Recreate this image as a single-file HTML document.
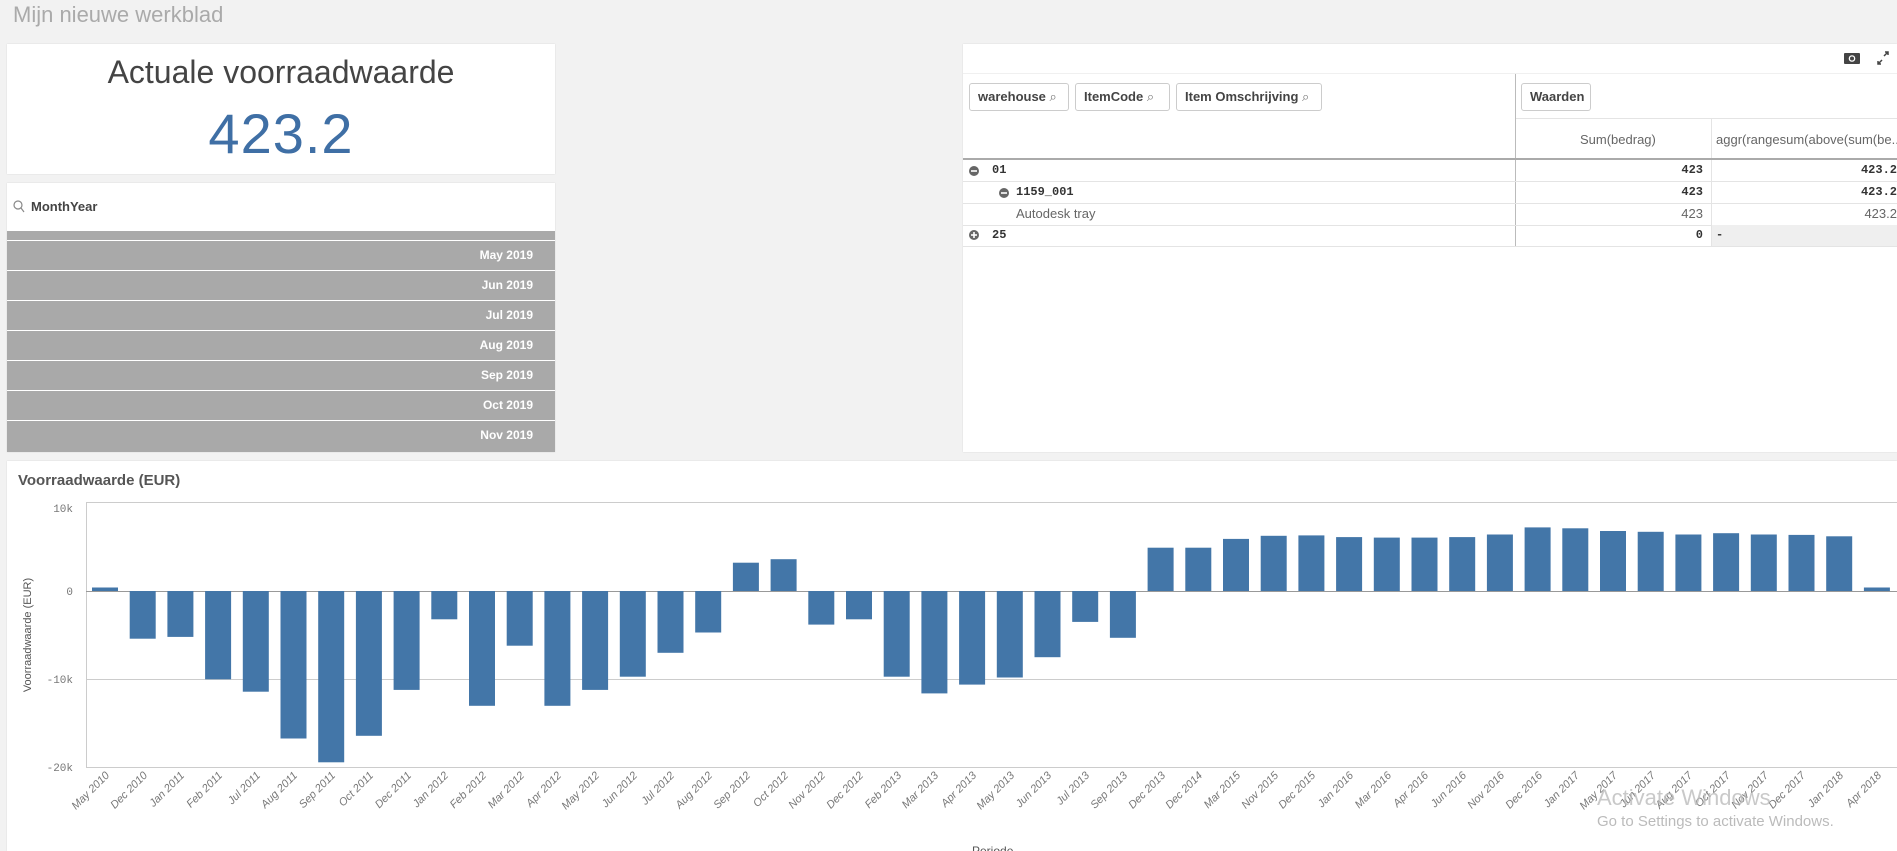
<!DOCTYPE html>
<html><head><meta charset="utf-8"><style>
*{margin:0;padding:0;box-sizing:border-box}
body{width:1897px;height:851px;background:#f2f2f2;font-family:"Liberation Sans",sans-serif;position:relative;overflow:hidden;color:#333}
.abs{position:absolute}
.card{position:absolute;background:#fff;box-shadow:0 0 1px #ccc}
.row{position:absolute;left:0;width:548px;height:29px;background:#a9a9a9;color:#fff;font-weight:bold;font-size:12px;text-align:right;padding-right:22px;line-height:29px}
.pill{position:absolute;top:83px;height:28px;border:1px solid #ccc;border-radius:3px;background:#fff;font-weight:bold;font-size:13px;line-height:26px;padding-left:8px;color:#444}
.mono{font-family:"Liberation Mono",monospace;font-weight:bold;font-size:12px}
.tr{position:absolute;left:963px;width:934px;height:22px;border-bottom:1px solid #e4e4e4}
</style></head><body>
<div class="abs" style="left:13px;top:2px;font-size:22px;color:#aaa">Mijn nieuwe werkblad</div>

<div class="card" style="left:7px;top:44px;width:548px;height:130px;overflow:hidden">
<div class="abs" style="left:0;width:548px;top:12px;text-align:center;font-size:32px;line-height:1;color:#444">Actuale voorraadwaarde</div>
<div class="abs" style="left:0;width:548px;top:62px;text-align:center;font-size:56px;line-height:1;color:#3f6fa5;letter-spacing:1px">423.2</div>
</div>

<div class="card" style="left:7px;top:183px;width:548px;height:269px;overflow:hidden">
<svg class="abs" style="left:6px;top:17px" width="12" height="13"><circle cx="5" cy="5" r="4" fill="none" stroke="#888" stroke-width="1.2"/><line x1="8" y1="8" x2="11" y2="12" stroke="#888" stroke-width="1.2"/></svg>
<div class="abs" style="left:24px;top:16px;font-weight:bold;font-size:13px;color:#444">MonthYear</div>
<div class="row" style="top:48px;height:9px"></div>
<div class="row" style="top:58px">May 2019</div>
<div class="row" style="top:88px">Jun 2019</div>
<div class="row" style="top:118px">Jul 2019</div>
<div class="row" style="top:148px">Aug 2019</div>
<div class="row" style="top:178px">Sep 2019</div>
<div class="row" style="top:208px">Oct 2019</div>
<div class="row" style="top:238px;height:31px">Nov 2019</div>
</div>

<div class="card" style="left:963px;top:44px;width:934px;height:408px"></div>
<svg class="abs" style="left:1843px;top:51px" width="18" height="14"><rect x="1" y="2" width="16" height="11" rx="1" fill="#444"/><circle cx="9" cy="7.5" r="3.3" fill="#fff"/><circle cx="9" cy="7.5" r="2" fill="#444"/></svg>
<svg class="abs" style="left:1876px;top:50px" width="14" height="16"><path d="M8 6L12 2M9 2h3v3M6 10L2 14M2 11v3h3" stroke="#444" stroke-width="1.5" fill="none"/></svg>
<div class="abs" style="left:963px;top:73px;width:934px;height:1px;background:#f0f0f0"></div>
<div class="pill" style="left:969px;width:100px">warehouse <span style="font-weight:normal;color:#777">&#x2315;</span></div>
<div class="pill" style="left:1075px;width:95px">ItemCode <span style="font-weight:normal;color:#777">&#x2315;</span></div>
<div class="pill" style="left:1176px;width:146px">Item Omschrijving <span style="font-weight:normal;color:#777">&#x2315;</span></div>
<div class="abs" style="left:1515px;top:74px;width:1px;height:172px;background:#bbb"></div>
<div class="pill" style="left:1521px;width:70px">Waarden</div>
<div class="abs" style="left:1516px;top:118px;width:381px;height:1px;background:#e4e4e4"></div>
<div class="abs" style="left:1711px;top:118px;width:1px;height:128px;background:#e4e4e4"></div>
<div class="abs" style="left:1580px;top:132px;font-size:13px;color:#666">Sum(bedrag)</div>
<div class="abs" style="left:1716px;top:132px;font-size:13px;color:#666;white-space:nowrap">aggr(rangesum(above(sum(be...</div>
<div class="abs" style="left:963px;top:158px;width:934px;height:2px;background:#aaa"></div>
<div class="tr" style="top:160px"></div><div class="tr" style="top:182px"></div><div class="tr" style="top:204px"></div><div class="tr" style="top:225px"></div>
<div class="abs" style="left:1712px;top:225px;width:185px;height:21px;background:#efefef"></div>
<svg class="abs" style="left:968px;top:165px" width="12" height="12"><circle cx="6" cy="6" r="5" fill="#666"/><rect x="3" y="5.2" width="6" height="1.6" fill="#fff"/></svg>
<svg class="abs" style="left:998px;top:187px" width="12" height="12"><circle cx="6" cy="6" r="5" fill="#666"/><rect x="3" y="5.2" width="6" height="1.6" fill="#fff"/></svg>
<svg class="abs" style="left:968px;top:229px" width="12" height="12"><circle cx="6" cy="6" r="5" fill="#666"/><rect x="3" y="5.2" width="6" height="1.6" fill="#fff"/><rect x="5.2" y="3" width="1.6" height="6" fill="#fff"/></svg>
<div class="abs mono" style="left:992px;top:163px">01</div>
<div class="abs mono" style="left:1016px;top:185px">1159_001</div>
<div class="abs" style="left:1016px;top:206px;font-size:13px;color:#666">Autodesk tray</div>
<div class="abs mono" style="left:992px;top:228px">25</div>
<div class="abs mono" style="left:1600px;width:103px;text-align:right;top:163px">423</div>
<div class="abs mono" style="left:1600px;width:103px;text-align:right;top:185px">423</div>
<div class="abs" style="left:1600px;width:103px;text-align:right;top:206px;font-size:13px;color:#666">423</div>
<div class="abs mono" style="left:1600px;width:103px;text-align:right;top:228px">0</div>
<div class="abs mono" style="left:1716px;top:228px">-</div>
<div class="abs mono" style="left:1790px;width:107px;text-align:right;top:163px">423.2</div>
<div class="abs mono" style="left:1790px;width:107px;text-align:right;top:185px">423.2</div>
<div class="abs" style="left:1790px;width:107px;text-align:right;top:206px;font-size:13px;color:#666">423.2</div>

<div class="card" style="left:7px;top:461px;width:1890px;height:390px"></div>
<div class="abs" style="left:18px;top:472px;font-weight:bold;font-size:15px;color:#555">Voorraadwaarde (EUR)</div>
<svg class="abs" style="left:0;top:0" width="1897" height="851" font-family="Liberation Sans, sans-serif">
<g stroke="#ccc" stroke-width="1"><line x1="86" y1="502.5" x2="1897" y2="502.5"/><line x1="86" y1="679.5" x2="1897" y2="679.5"/><line x1="86" y1="767.5" x2="1897" y2="767.5"/><line x1="86.5" y1="502" x2="86.5" y2="768"/></g>
<line x1="86" y1="591.5" x2="1897" y2="591.5" stroke="#999"/>
<g font-family="Liberation Mono, monospace" font-size="11" fill="#777" text-anchor="end"><text x="73" y="512">10k</text><text x="73" y="595">0</text><text x="73" y="683">-10k</text><text x="73" y="771">-20k</text></g>
<text transform="translate(31,635) rotate(-90)" text-anchor="middle" font-size="11" fill="#555">Voorraadwaarde (EUR)</text>
<g fill="#4376a8">
<rect x="92" y="587.5" width="26" height="3.5"/><rect x="129.7" y="591" width="26" height="47.7"/><rect x="167.4" y="591" width="26" height="45.9"/><rect x="205.1" y="591" width="26" height="88.3"/><rect x="242.8" y="591" width="26" height="100.7"/><rect x="280.5" y="591" width="26" height="147.5"/><rect x="318.2" y="591" width="26" height="171.3"/><rect x="355.9" y="591" width="26" height="144.8"/><rect x="393.6" y="591" width="26" height="98.9"/><rect x="431.3" y="591" width="26" height="28.3"/><rect x="469" y="591" width="26" height="114.8"/><rect x="506.7" y="591" width="26" height="54.7"/><rect x="544.4" y="591" width="26" height="114.8"/><rect x="582.1" y="591" width="26" height="98.9"/><rect x="619.8" y="591" width="26" height="85.7"/><rect x="657.5" y="591" width="26" height="61.8"/><rect x="695.2" y="591" width="26" height="41.5"/><rect x="732.9" y="562.7" width="26" height="28.3"/><rect x="770.6" y="559.2" width="26" height="31.8"/><rect x="808.3" y="591" width="26" height="33.6"/><rect x="846" y="591" width="26" height="28.3"/><rect x="883.7" y="591" width="26" height="85.7"/><rect x="921.4" y="591" width="26" height="102.4"/><rect x="959.1" y="591" width="26" height="93.6"/><rect x="996.8" y="591" width="26" height="86.5"/><rect x="1034.5" y="591" width="26" height="66.2"/><rect x="1072.2" y="591" width="26" height="30.9"/><rect x="1109.9" y="591" width="26" height="46.8"/><rect x="1147.6" y="547.7" width="26" height="43.3"/><rect x="1185.3" y="547.7" width="26" height="43.3"/><rect x="1223" y="538.9" width="26" height="52.1"/><rect x="1260.7" y="535.8" width="26" height="55.2"/><rect x="1298.4" y="535.4" width="26" height="55.6"/><rect x="1336.1" y="537.1" width="26" height="53.9"/><rect x="1373.8" y="537.6" width="26" height="53.4"/><rect x="1411.5" y="537.6" width="26" height="53.4"/><rect x="1449.2" y="537.1" width="26" height="53.9"/><rect x="1486.9" y="534.5" width="26" height="56.5"/><rect x="1524.6" y="527.4" width="26" height="63.6"/><rect x="1562.3" y="528.3" width="26" height="62.7"/><rect x="1600" y="531" width="26" height="60"/><rect x="1637.7" y="531.8" width="26" height="59.2"/><rect x="1675.4" y="534.5" width="26" height="56.5"/><rect x="1713.1" y="533.2" width="26" height="57.8"/><rect x="1750.8" y="534.5" width="26" height="56.5"/><rect x="1788.5" y="534.9" width="26" height="56.1"/><rect x="1826.2" y="536.3" width="26" height="54.7"/><rect x="1863.9" y="587.5" width="26" height="3.5"/>
</g>
<g font-size="11" fill="#777" text-anchor="end" font-style="italic">
<text transform="translate(110,776) rotate(-45)">May 2010</text><text transform="translate(148,776) rotate(-45)">Dec 2010</text><text transform="translate(185,776) rotate(-45)">Jan 2011</text><text transform="translate(223,776) rotate(-45)">Feb 2011</text><text transform="translate(261,776) rotate(-45)">Jul 2011</text><text transform="translate(298,776) rotate(-45)">Aug 2011</text><text transform="translate(336,776) rotate(-45)">Sep 2011</text><text transform="translate(374,776) rotate(-45)">Oct 2011</text><text transform="translate(412,776) rotate(-45)">Dec 2011</text><text transform="translate(449,776) rotate(-45)">Jan 2012</text><text transform="translate(487,776) rotate(-45)">Feb 2012</text><text transform="translate(525,776) rotate(-45)">Mar 2012</text><text transform="translate(562,776) rotate(-45)">Apr 2012</text><text transform="translate(600,776) rotate(-45)">May 2012</text><text transform="translate(638,776) rotate(-45)">Jun 2012</text><text transform="translate(675,776) rotate(-45)">Jul 2012</text><text transform="translate(713,776) rotate(-45)">Aug 2012</text><text transform="translate(751,776) rotate(-45)">Sep 2012</text><text transform="translate(789,776) rotate(-45)">Oct 2012</text><text transform="translate(826,776) rotate(-45)">Nov 2012</text><text transform="translate(864,776) rotate(-45)">Dec 2012</text><text transform="translate(902,776) rotate(-45)">Feb 2013</text><text transform="translate(939,776) rotate(-45)">Mar 2013</text><text transform="translate(977,776) rotate(-45)">Apr 2013</text><text transform="translate(1015,776) rotate(-45)">May 2013</text><text transform="translate(1052,776) rotate(-45)">Jun 2013</text><text transform="translate(1090,776) rotate(-45)">Jul 2013</text><text transform="translate(1128,776) rotate(-45)">Sep 2013</text><text transform="translate(1166,776) rotate(-45)">Dec 2013</text><text transform="translate(1203,776) rotate(-45)">Dec 2014</text><text transform="translate(1241,776) rotate(-45)">Mar 2015</text><text transform="translate(1279,776) rotate(-45)">Nov 2015</text><text transform="translate(1316,776) rotate(-45)">Dec 2015</text><text transform="translate(1354,776) rotate(-45)">Jan 2016</text><text transform="translate(1392,776) rotate(-45)">Mar 2016</text><text transform="translate(1429,776) rotate(-45)">Apr 2016</text><text transform="translate(1467,776) rotate(-45)">Jun 2016</text><text transform="translate(1505,776) rotate(-45)">Nov 2016</text><text transform="translate(1543,776) rotate(-45)">Dec 2016</text><text transform="translate(1580,776) rotate(-45)">Jan 2017</text><text transform="translate(1618,776) rotate(-45)">May 2017</text><text transform="translate(1656,776) rotate(-45)">Jun 2017</text><text transform="translate(1693,776) rotate(-45)">Aug 2017</text><text transform="translate(1731,776) rotate(-45)">Oct 2017</text><text transform="translate(1769,776) rotate(-45)">Nov 2017</text><text transform="translate(1806,776) rotate(-45)">Dec 2017</text><text transform="translate(1844,776) rotate(-45)">Jan 2018</text><text transform="translate(1882,776) rotate(-45)">Apr 2018</text>
</g>
<text x="972" y="855" font-size="12" fill="#555">Periode</text>
<text x="1597" y="805" font-size="22" fill="#bbb" fill-opacity="0.8">Activate Windows</text>
<text x="1597" y="826" font-size="15" fill="#bbb">Go to Settings to activate Windows.</text>
</svg>
</body></html>
